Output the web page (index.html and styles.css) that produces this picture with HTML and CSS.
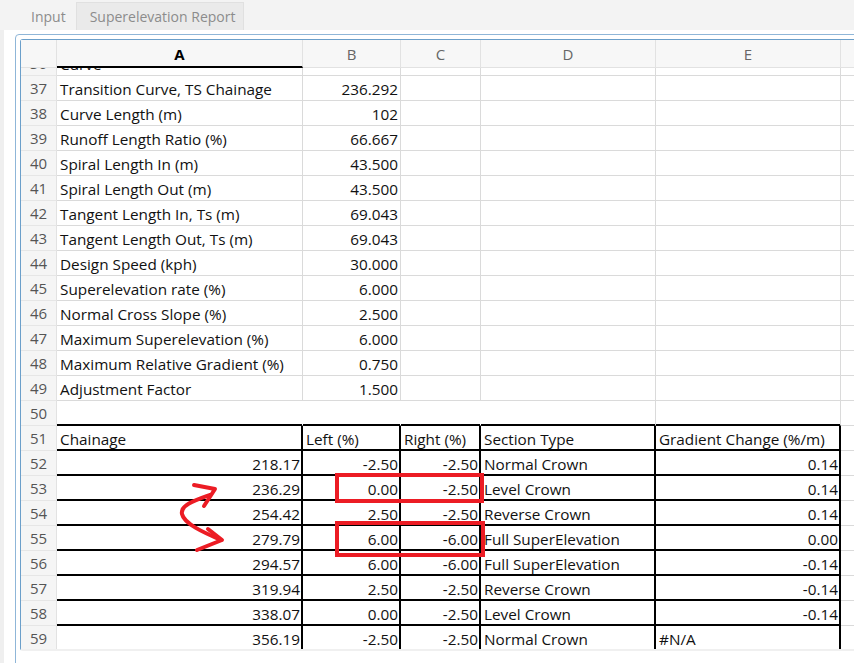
FILE: index.html
```html
<!DOCTYPE html>
<html lang="en">
<head>
    <meta charset="UTF-8">
    <meta name="viewport" content="width=device-width, initial-scale=1.0">
    <title>Superelevation Report</title>
    <link rel="stylesheet" href="styles.css">
</head>
<body>
    <!-- Tabs -->
    <div class="tabs">
        <div class="tab">Input</div>
        <div class="tab active">Superelevation Report</div>
    </div>

    <div class="view">
        <div class="frame">
            <div class="inner">
                <div class="row head">
                    <div class="hc corner"></div>
                    <div class="hc sel">A</div>
                    <div class="hc">B</div>
                    <div class="hc">C</div>
                    <div class="hc">D</div>
                    <div class="hc">E</div>
                    <div class="hc"></div>
                </div>
                <div class="body">
                    <div class="rows" id="rows"></div>
                </div>
            </div>
        </div>
    </div>

    <!-- hand drawn marks on top of the sheet -->
    <svg class="marks" width="854" height="663" viewBox="0 0 854 663">
        <rect x="337" y="475" width="145" height="26" fill="none" stroke="#ec1c24" stroke-width="4"/>
        <rect x="337" y="523" width="146" height="32" fill="none" stroke="#ec1c24" stroke-width="4"/>
        <g fill="none" stroke="#ec1c24" stroke-width="4" stroke-linecap="round" stroke-linejoin="round">
            <path d="M210 495 C196 500 180 505 182 514 C184 524 205 533 221 540"/>
            <path d="M194 485 L215 489 L204 506"/>
            <path d="M208 529 L222 540 L197 550"/>
        </g>
    </svg>

    <script>
// sheet data, one entry per row
const info = [
  [36, "Curve", ""],
  [37, "Transition Curve, TS Chainage", "236.292"],
  [38, "Curve Length (m)", "102"],
  [39, "Runoff Length Ratio (%)", "66.667"],
  [40, "Spiral Length In (m)", "43.500"],
  [41, "Spiral Length Out (m)", "43.500"],
  [42, "Tangent Length In, Ts (m)", "69.043"],
  [43, "Tangent Length Out, Ts (m)", "69.043"],
  [44, "Design Speed (kph)", "30.000"],
  [45, "Superelevation rate (%)", "6.000"],
  [46, "Normal Cross Slope (%)", "2.500"],
  [47, "Maximum Superelevation (%)", "6.000"],
  [48, "Maximum Relative Gradient (%)", "0.750"],
  [49, "Adjustment Factor", "1.500"]
];

const report = [
  ["218.17", "-2.50", "-2.50", "Normal Crown", "0.14"],
  ["236.29", "0.00", "-2.50", "Level Crown", "0.14"],
  ["254.42", "2.50", "-2.50", "Reverse Crown", "0.14"],
  ["279.79", "6.00", "-6.00", "Full SuperElevation", "0.00"],
  ["294.57", "6.00", "-6.00", "Full SuperElevation", "-0.14"],
  ["319.94", "2.50", "-2.50", "Reverse Crown", "-0.14"],
  ["338.07", "0.00", "-2.50", "Level Crown", "-0.14"],
  ["356.19", "-2.50", "-2.50", "Normal Crown", "#N/A"]
];

const rows = document.getElementById("rows");

function cell(text, cls) {
  return `<div class="c ${cls || ""}">${text}</div>`;
}

let html = "";

info.forEach(r => {
  html += `<div class="row">
    <div class="rh">${r[0]}</div>
    ${cell(r[1])}${cell(r[2], "num")}${cell("")}${cell("")}${cell("")}${cell("")}
  </div>`;
});

// row 50 carries the top edge of the report table
html += `<div class="row">
  <div class="rh">50</div>
  ${cell("", "kb nr")}${cell("", "kb nr")}${cell("", "kb nr")}${cell("", "kb")}${cell("", "kb")}${cell("")}
</div>`;

html += `<div class="row">
  <div class="rh">51</div>
  ${cell("Chainage", "k")}${cell("Left (%)", "k")}${cell("Right (%)", "k")}${cell("Section Type", "k")}${cell("Gradient Change (%/m)", "k")}${cell("")}
</div>`;

report.forEach((r, i) => {
  const last = i === report.length - 1;
  html += `<div class="row">
    <div class="rh">${52 + i}</div>
    ${cell(r[0], "k num")}${cell(r[1], "k num")}${cell(r[2], "k num")}${cell(r[3], "k")}${cell(r[4], last ? "k" : "k num")}${cell("")}
  </div>`;
});

rows.innerHTML = html;
    </script>
</body>
</html>
```

FILE: styles.css
```css
html, body {
    margin: 0;
    overflow: hidden;
}

body {
    width: 854px;
    height: 663px;
    background-color: white;
    position: relative;
}

.tabs {
    height: 30px;
    background-color: #f3f3f3;
    display: flex;
    align-items: flex-end;
    padding-left: 17px;
    box-sizing: border-box;
}

.tab {
    height: 27px;
    display: flex;
    align-items: center;
    padding: 0 10px 0 14px;
    color: #8c8c8c;
    font-family: "Open Sans", sans-serif;
    font-size: 14px;
    box-sizing: border-box;
}

.tab.active {
    background-color: #eaeaea;
    border: 1px solid #e0e0e0;
    border-bottom: none;
    padding: 0 8px 0 13px;
    height: 28px;
}

.view {
    height: 633px;
    overflow: hidden;
    border-left: 4px solid #efefef;
    padding: 4px 0 0 11px;
    box-sizing: border-box;
    display: flex;
    align-items: flex-start;
}

.frame {
    flex: 1;
    height: 660px;
    margin-right: -30px;
    border: 1px solid #8fb6d8;
    border-radius: 4px;
    padding: 4px 0 0 4px;
}

.inner {
    border: 1px solid #6b9fca;
    border-radius: 3px;
    border-bottom: 2px solid #f0f0f0;
}

.row {
    display: grid;
    grid-template-columns: 36px 246px 98px 80px 175px 185px 1fr;
}

.head .hc {
    height: 28px;
    box-sizing: border-box;
    background-color: #f7f7f7;
    border-right: 1px solid #e2e2e2;
    border-bottom: 1px solid #e2e2e2;
    display: flex;
    align-items: center;
    justify-content: center;
    color: #666;
    font-family: "Open Sans", sans-serif;
    font-size: 15px;
    padding-top: 1px;
}

.head .hc.sel {
    color: black;
    font-weight: bold;
    border-bottom: 2px solid black;
}

.body {
    height: 581px;
    overflow: hidden;
}

/* scroll position: row 36 is mostly hidden */
.rows {
    margin-top: -17px;
}

.rh {
    height: 25px;
    box-sizing: border-box;
    background-color: #f5f5f5;
    border-right: 1px solid #e2e2e2;
    border-bottom: 1px solid #e6e6e6;
    display: flex;
    align-items: flex-end;
    justify-content: center;
    padding-bottom: 2px;
    color: #555;
    font-family: "Open Sans", sans-serif;
    font-size: 15px;
}

.c {
    height: 25px;
    box-sizing: border-box;
    border-right: 1px solid #dadada;
    border-bottom: 1px solid #dadada;
    display: flex;
    align-items: flex-end;
    padding: 0 2px 1px 3px;
    white-space: nowrap;
    overflow: hidden;
    font-family: "Open Sans", sans-serif;
    font-size: 15.3px;
    color: #111;
}

.num {
    justify-content: flex-end;
}

/* black table borders */
.k {
    border-right-color: black;
    border-bottom-color: black;
    box-shadow: inset -1px -1px 0 black;
}

.kb {
    border-bottom-color: black;
    box-shadow: inset 0 -1px 0 black;
}

.kb.nr {
    border-right-color: white;
}

.marks {
    position: absolute;
    left: 0;
    top: 0;
    pointer-events: none;
}
```
